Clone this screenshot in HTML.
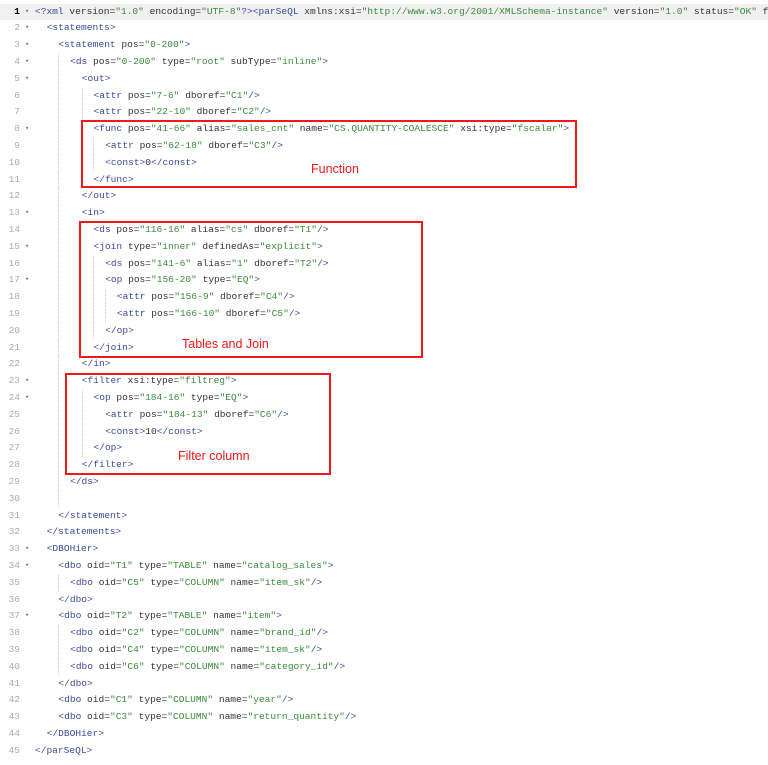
<!DOCTYPE html>
<html><head><meta charset="utf-8"><style>
html,body{margin:0;padding:0;background:#fff;width:768px;height:765px;overflow:hidden;position:relative}
.l{position:absolute;left:0;width:768px;height:16.8px;line-height:16.8px;font-family:"Liberation Mono",monospace;font-size:9.55px;color:#333;white-space:pre}
.n{position:absolute;left:0;width:20px;text-align:right;color:#aaa;font-size:9.5px}
.f{position:absolute;left:25px;color:#777;font-size:7px}
.c{position:absolute;left:35px}
.t{color:#3b4a9c}.v{color:#3a8a3a}
.g{position:absolute;top:0;height:16.8px;border-left:1px dotted #ccc}
.box{position:absolute;border:2px solid #f01818}
.lab{position:absolute;color:#f01818;font-family:"Liberation Sans",sans-serif;font-size:12.5px}
</style></head><body>
<div class="l" style="top:3.6px;background:#f0f0f0"><span class="n" style="color:#000;font-weight:bold">1</span><span class="f">▾</span><span class="c"><span class="t">&lt;?xml</span> version=<span class="v">"1.0"</span> encoding=<span class="v">"UTF-8"</span><span class="t">?&gt;&lt;parSeQL</span> xmlns:xsi=<span class="v">"http://www.w3.org/2001/XMLSchema-instance"</span> version=<span class="v">"1.0"</span> status=<span class="v">"OK"</span> f</span></div>
<div class="l" style="top:20.4px"><span class="n">2</span><span class="f">▾</span><span class="c" style="left:46.7px"><span class="t">&lt;statements&gt;</span></span></div>
<div class="l" style="top:37.2px"><span class="n">3</span><span class="f">▾</span><span class="c" style="left:58.4px"><span class="t">&lt;statement</span> pos=<span class="v">"0-200"</span><span class="t">&gt;</span></span></div>
<div class="l" style="top:54px"><span class="n">4</span><span class="f">▾</span><span class="g" style="left:58px"></span><span class="c" style="left:70.1px"><span class="t">&lt;ds</span> pos=<span class="v">"0-200"</span> type=<span class="v">"root"</span> subType=<span class="v">"inline"</span><span class="t">&gt;</span></span></div>
<div class="l" style="top:70.8px"><span class="n">5</span><span class="f">▾</span><span class="g" style="left:58px"></span><span class="c" style="left:81.8px"><span class="t">&lt;out&gt;</span></span></div>
<div class="l" style="top:87.6px"><span class="n">6</span><span class="g" style="left:58px"></span><span class="g" style="left:82px"></span><span class="c" style="left:93.5px"><span class="t">&lt;attr</span> pos=<span class="v">"7-6"</span> dboref=<span class="v">"C1"</span><span class="t">/&gt;</span></span></div>
<div class="l" style="top:104.4px"><span class="n">7</span><span class="g" style="left:58px"></span><span class="g" style="left:82px"></span><span class="c" style="left:93.5px"><span class="t">&lt;attr</span> pos=<span class="v">"22-10"</span> dboref=<span class="v">"C2"</span><span class="t">/&gt;</span></span></div>
<div class="l" style="top:121.2px"><span class="n">8</span><span class="f">▾</span><span class="g" style="left:58px"></span><span class="c" style="left:93.5px"><span class="t">&lt;func</span> pos=<span class="v">"41-66"</span> alias=<span class="v">"sales_cnt"</span> name=<span class="v">"CS.QUANTITY-COALESCE"</span> xsi:type=<span class="v">"fscalar"</span><span class="t">&gt;</span></span></div>
<div class="l" style="top:138px"><span class="n">9</span><span class="g" style="left:58px"></span><span class="g" style="left:93px"></span><span class="c" style="left:105.2px"><span class="t">&lt;attr</span> pos=<span class="v">"62-18"</span> dboref=<span class="v">"C3"</span><span class="t">/&gt;</span></span></div>
<div class="l" style="top:154.8px"><span class="n">10</span><span class="g" style="left:58px"></span><span class="g" style="left:93px"></span><span class="c" style="left:105.2px"><span class="t">&lt;const&gt;</span>0<span class="t">&lt;/const&gt;</span></span></div>
<div class="l" style="top:171.6px"><span class="n">11</span><span class="g" style="left:58px"></span><span class="c" style="left:93.5px"><span class="t">&lt;/func&gt;</span></span></div>
<div class="l" style="top:188.4px"><span class="n">12</span><span class="g" style="left:58px"></span><span class="c" style="left:81.8px"><span class="t">&lt;/out&gt;</span></span></div>
<div class="l" style="top:205.2px"><span class="n">13</span><span class="f">▾</span><span class="g" style="left:58px"></span><span class="c" style="left:81.8px"><span class="t">&lt;in&gt;</span></span></div>
<div class="l" style="top:222px"><span class="n">14</span><span class="g" style="left:58px"></span><span class="c" style="left:93.5px"><span class="t">&lt;ds</span> pos=<span class="v">"116-16"</span> alias=<span class="v">"cs"</span> dboref=<span class="v">"T1"</span><span class="t">/&gt;</span></span></div>
<div class="l" style="top:238.8px"><span class="n">15</span><span class="f">▾</span><span class="g" style="left:58px"></span><span class="c" style="left:93.5px"><span class="t">&lt;join</span> type=<span class="v">"inner"</span> definedAs=<span class="v">"explicit"</span><span class="t">&gt;</span></span></div>
<div class="l" style="top:255.6px"><span class="n">16</span><span class="g" style="left:58px"></span><span class="g" style="left:93px"></span><span class="c" style="left:105.2px"><span class="t">&lt;ds</span> pos=<span class="v">"141-6"</span> alias=<span class="v">"1"</span> dboref=<span class="v">"T2"</span><span class="t">/&gt;</span></span></div>
<div class="l" style="top:272.4px"><span class="n">17</span><span class="f">▾</span><span class="g" style="left:58px"></span><span class="g" style="left:93px"></span><span class="c" style="left:105.2px"><span class="t">&lt;op</span> pos=<span class="v">"156-20"</span> type=<span class="v">"EQ"</span><span class="t">&gt;</span></span></div>
<div class="l" style="top:289.2px"><span class="n">18</span><span class="g" style="left:58px"></span><span class="g" style="left:93px"></span><span class="g" style="left:105px"></span><span class="c" style="left:116.9px"><span class="t">&lt;attr</span> pos=<span class="v">"156-9"</span> dboref=<span class="v">"C4"</span><span class="t">/&gt;</span></span></div>
<div class="l" style="top:306px"><span class="n">19</span><span class="g" style="left:58px"></span><span class="g" style="left:93px"></span><span class="g" style="left:105px"></span><span class="c" style="left:116.9px"><span class="t">&lt;attr</span> pos=<span class="v">"166-10"</span> dboref=<span class="v">"C5"</span><span class="t">/&gt;</span></span></div>
<div class="l" style="top:322.8px"><span class="n">20</span><span class="g" style="left:58px"></span><span class="g" style="left:93px"></span><span class="c" style="left:105.2px"><span class="t">&lt;/op&gt;</span></span></div>
<div class="l" style="top:339.6px"><span class="n">21</span><span class="g" style="left:58px"></span><span class="c" style="left:93.5px"><span class="t">&lt;/join&gt;</span></span></div>
<div class="l" style="top:356.4px"><span class="n">22</span><span class="g" style="left:58px"></span><span class="c" style="left:81.8px"><span class="t">&lt;/in&gt;</span></span></div>
<div class="l" style="top:373.2px"><span class="n">23</span><span class="f">▾</span><span class="g" style="left:58px"></span><span class="c" style="left:81.8px"><span class="t">&lt;filter</span> xsi:type=<span class="v">"filtreg"</span><span class="t">&gt;</span></span></div>
<div class="l" style="top:390px"><span class="n">24</span><span class="f">▾</span><span class="g" style="left:58px"></span><span class="g" style="left:82px"></span><span class="c" style="left:93.5px"><span class="t">&lt;op</span> pos=<span class="v">"184-16"</span> type=<span class="v">"EQ"</span><span class="t">&gt;</span></span></div>
<div class="l" style="top:406.8px"><span class="n">25</span><span class="g" style="left:58px"></span><span class="g" style="left:82px"></span><span class="c" style="left:105.2px"><span class="t">&lt;attr</span> pos=<span class="v">"184-13"</span> dboref=<span class="v">"C6"</span><span class="t">/&gt;</span></span></div>
<div class="l" style="top:423.6px"><span class="n">26</span><span class="g" style="left:58px"></span><span class="g" style="left:82px"></span><span class="c" style="left:105.2px"><span class="t">&lt;const&gt;</span>10<span class="t">&lt;/const&gt;</span></span></div>
<div class="l" style="top:440.4px"><span class="n">27</span><span class="g" style="left:58px"></span><span class="g" style="left:82px"></span><span class="c" style="left:93.5px"><span class="t">&lt;/op&gt;</span></span></div>
<div class="l" style="top:457.2px"><span class="n">28</span><span class="g" style="left:58px"></span><span class="c" style="left:81.8px"><span class="t">&lt;/filter&gt;</span></span></div>
<div class="l" style="top:474px"><span class="n">29</span><span class="g" style="left:58px"></span><span class="c" style="left:70.1px"><span class="t">&lt;/ds&gt;</span></span></div>
<div class="l" style="top:490.8px"><span class="n">30</span><span class="g" style="left:58px"></span></div>
<div class="l" style="top:507.6px"><span class="n">31</span><span class="c" style="left:58.4px"><span class="t">&lt;/statement&gt;</span></span></div>
<div class="l" style="top:524.4px"><span class="n">32</span><span class="c" style="left:46.7px"><span class="t">&lt;/statements&gt;</span></span></div>
<div class="l" style="top:541.2px"><span class="n">33</span><span class="f">▾</span><span class="c" style="left:46.7px"><span class="t">&lt;DBOHier&gt;</span></span></div>
<div class="l" style="top:558px"><span class="n">34</span><span class="f">▾</span><span class="c" style="left:58.4px"><span class="t">&lt;dbo</span> oid=<span class="v">"T1"</span> type=<span class="v">"TABLE"</span> name=<span class="v">"catalog_sales"</span><span class="t">&gt;</span></span></div>
<div class="l" style="top:574.8px"><span class="n">35</span><span class="g" style="left:58px"></span><span class="c" style="left:70.1px"><span class="t">&lt;dbo</span> oid=<span class="v">"C5"</span> type=<span class="v">"COLUMN"</span> name=<span class="v">"item_sk"</span><span class="t">/&gt;</span></span></div>
<div class="l" style="top:591.6px"><span class="n">36</span><span class="c" style="left:58.4px"><span class="t">&lt;/dbo&gt;</span></span></div>
<div class="l" style="top:608.4px"><span class="n">37</span><span class="f">▾</span><span class="c" style="left:58.4px"><span class="t">&lt;dbo</span> oid=<span class="v">"T2"</span> type=<span class="v">"TABLE"</span> name=<span class="v">"item"</span><span class="t">&gt;</span></span></div>
<div class="l" style="top:625.2px"><span class="n">38</span><span class="g" style="left:58px"></span><span class="c" style="left:70.1px"><span class="t">&lt;dbo</span> oid=<span class="v">"C2"</span> type=<span class="v">"COLUMN"</span> name=<span class="v">"brand_id"</span><span class="t">/&gt;</span></span></div>
<div class="l" style="top:642px"><span class="n">39</span><span class="g" style="left:58px"></span><span class="c" style="left:70.1px"><span class="t">&lt;dbo</span> oid=<span class="v">"C4"</span> type=<span class="v">"COLUMN"</span> name=<span class="v">"item_sk"</span><span class="t">/&gt;</span></span></div>
<div class="l" style="top:658.8px"><span class="n">40</span><span class="g" style="left:58px"></span><span class="c" style="left:70.1px"><span class="t">&lt;dbo</span> oid=<span class="v">"C6"</span> type=<span class="v">"COLUMN"</span> name=<span class="v">"category_id"</span><span class="t">/&gt;</span></span></div>
<div class="l" style="top:675.6px"><span class="n">41</span><span class="c" style="left:58.4px"><span class="t">&lt;/dbo&gt;</span></span></div>
<div class="l" style="top:692.4px"><span class="n">42</span><span class="c" style="left:58.4px"><span class="t">&lt;dbo</span> oid=<span class="v">"C1"</span> type=<span class="v">"COLUMN"</span> name=<span class="v">"year"</span><span class="t">/&gt;</span></span></div>
<div class="l" style="top:709.2px"><span class="n">43</span><span class="c" style="left:58.4px"><span class="t">&lt;dbo</span> oid=<span class="v">"C3"</span> type=<span class="v">"COLUMN"</span> name=<span class="v">"return_quantity"</span><span class="t">/&gt;</span></span></div>
<div class="l" style="top:726px"><span class="n">44</span><span class="c" style="left:46.7px"><span class="t">&lt;/DBOHier&gt;</span></span></div>
<div class="l" style="top:742.8px"><span class="n">45</span><span class="c" style="left:35px"><span class="t">&lt;/parSeQL&gt;</span></span></div>

<div class="box" style="left:81px;top:120px;width:492px;height:64px"></div>
<div class="lab" style="left:311px;top:162px">Function</div>
<div class="box" style="left:79px;top:221px;width:340px;height:133px"></div>
<div class="lab" style="left:182px;top:337px">Tables and Join</div>
<div class="box" style="left:65px;top:373px;width:262px;height:98px"></div>
<div class="lab" style="left:178px;top:449px">Filter column</div>
</body></html>
